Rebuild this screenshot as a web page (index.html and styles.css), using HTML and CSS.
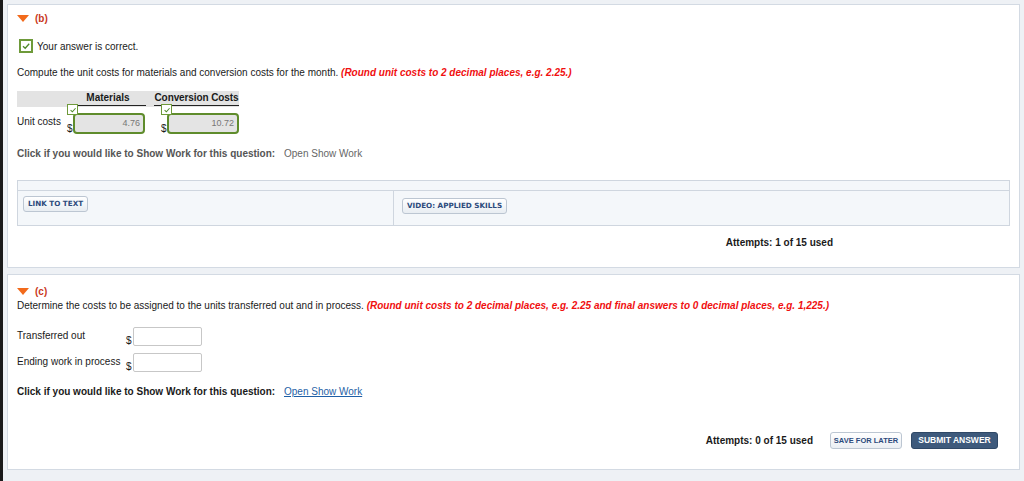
FILE: index.html
```html
<!DOCTYPE html>
<html lang="en">
<head>
  <meta charset="UTF-8">
  <title>Question Parts</title>
  <link rel="stylesheet" href="styles.css">
</head>
<body>

  <div class="panel panel-b">
    <div class="part-head"><span class="arrow"></span><span class="part-label">(b)</span></div>

    <div class="correct">
      <span class="check-box big"><svg viewBox="0 0 10 10"><path d="M2 5.2 L4.2 7.3 L8.2 2.8" /></svg></span>
      <span>Your answer is correct.</span>
    </div>

    <div class="question">Compute the unit costs for materials and conversion costs for the month. <span class="hint">(Round unit costs to 2 decimal places, e.g. 2.25.)</span></div>

    <div class="cost-table">
      <div class="cost-head">
        <div class="head-spacer"></div>
        <div class="head-cell mat">Materials</div>
        <div class="head-cell conv">Conversion Costs</div>
      </div>
      <div class="cost-row">
        <div class="row-label">Unit costs</div>
        <div class="cost-cell mat">
          <span class="dollar">$</span>
          <div class="answer">
            <span class="check-box small"><svg viewBox="0 0 10 10"><path d="M2 5.2 L4.2 7.3 L8.2 2.8" /></svg></span>
            <div class="answer-input">4.76</div>
          </div>
        </div>
        <div class="cost-cell conv">
          <span class="dollar">$</span>
          <div class="answer">
            <span class="check-box small"><svg viewBox="0 0 10 10"><path d="M2 5.2 L4.2 7.3 L8.2 2.8" /></svg></span>
            <div class="answer-input">10.72</div>
          </div>
        </div>
      </div>
    </div>

    <div class="show-work muted">
      <span class="sw-label">Click if you would like to Show Work for this question:</span>
      <span class="sw-link">Open Show Work</span>
    </div>

    <div class="resources">
      <div class="res-top"></div>
      <div class="res-row">
        <div class="res-cell left"><span class="res-btn">LINK TO TEXT</span></div>
        <div class="res-cell right"><span class="res-btn">VIDEO: APPLIED SKILLS</span></div>
      </div>
    </div>

    <div class="attempts-row first">
      <span class="attempts">Attempts: 1 of 15 used</span>
    </div>
  </div>

  <div class="panel panel-c">
    <div class="part-head"><span class="arrow"></span><span class="part-label">(c)</span></div>

    <div class="question tight">Determine the costs to be assigned to the units transferred out and in process. <span class="hint">(Round unit costs to 2 decimal places, e.g. 2.25 and final answers to 0 decimal places, e.g. 1,225.)</span></div>

    <div class="entry top">
      <div class="entry-label">Transferred out</div>
      <span class="dollar">$</span>
      <div class="blank-input"></div>
    </div>
    <div class="entry">
      <div class="entry-label">Ending work in process</div>
      <span class="dollar">$</span>
      <div class="blank-input"></div>
    </div>

    <div class="show-work">
      <span class="sw-label">Click if you would like to Show Work for this question:</span>
      <a class="sw-link link" href="#">Open Show Work</a>
    </div>

    <div class="attempts-row second">
      <span class="attempts">Attempts: 0 of 15 used</span>
      <span class="btn save">SAVE FOR LATER</span>
      <span class="btn submit">SUBMIT ANSWER</span>
    </div>
  </div>

</body>
</html>
```

FILE: styles.css
```css
* {
  box-sizing: border-box;
}

body {
  margin: 0;
  padding: 4px 4px 10px 4px;
  background-color: #eef1f5;
  border-left: 3px solid #1a1a1a;
  font-family: "Liberation Sans", Arial, sans-serif;
  font-size: 10px;
  color: #1a1a1a;
  min-height: 481px;
}

.panel {
  background-color: white;
  border: 1px solid #d3dae3;
  padding: 6px 9px 0 9px;
}

.panel-b {
  height: 264px;
}

.panel-c {
  margin-top: 6px;
  height: 196px;
  padding-top: 9px;
}

.part-head {
  display: flex;
  align-items: center;
  height: 14px;
  gap: 6px;
}

.arrow {
  width: 0;
  height: 0;
  border-left: 6px solid transparent;
  border-right: 6px solid transparent;
  border-top: 7px solid #f26a1b;
  margin-top: 1px;
}

.part-label {
  color: #c9381c;
  font-weight: bold;
  font-size: 10px;
}

.correct {
  display: flex;
  align-items: center;
  gap: 4px;
  margin-top: 14px;
  margin-left: 2px;
  height: 14px;
}

.check-box {
  display: inline-flex;
  align-items: center;
  justify-content: center;
  background: white;
  border: 2px solid #6e9a3a;
}

.check-box svg {
  fill: none;
  stroke: #4f8a2a;
  stroke-width: 1.3;
}

.check-box.big {
  width: 14px;
  height: 14px;
}

.check-box.big svg {
  width: 10px;
  height: 10px;
}

.check-box.small {
  position: absolute;
  top: -9px;
  left: -6px;
  width: 11px;
  height: 11px;
  border-width: 1px;
}

.check-box.small svg {
  width: 8px;
  height: 8px;
}

.question {
  margin-top: 13px;
  line-height: 14px;
}

.question.tight {
  margin-top: 1px;
}

.hint {
  color: #f01010;
  font-weight: bold;
  font-style: italic;
}

.cost-table {
  margin-top: 11px;
}

.cost-head {
  display: flex;
  width: 222px;
  height: 16px;
  background-color: #e3e3e3;
}

.head-spacer {
  width: 53px;
}

.head-cell {
  font-weight: bold;
  text-align: center;
  white-space: nowrap;
  height: 15px;
  line-height: 14px;
  border-bottom: 1px solid #222;
}

.head-cell.mat {
  width: 76px;
}

.head-cell.conv {
  width: 85px;
  margin-left: 8px;
  letter-spacing: -0.1px;
}

.cost-row {
  display: flex;
  height: 27px;
}

.row-label {
  width: 50px;
  padding-top: 9px;
}

.cost-cell {
  display: flex;
  align-items: flex-end;
  padding-top: 5px;
}

.cost-cell.conv {
  margin-left: 16px;
}

.cost-cell .dollar {
  width: 6px;
  line-height: 10px;
}

.answer {
  position: relative;
}

.answer-input {
  width: 72px;
  height: 21px;
  border: 2px solid #5f8c2c;
  border-radius: 4px;
  background-color: #e4e4e4;
  color: #777;
  font-size: 9px;
  text-align: right;
  padding: 3px 3px 0 0;
}

.show-work {
  display: flex;
  margin-top: 13px;
  line-height: 14px;
}

.sw-label {
  font-weight: bold;
  width: 267px;
}

.muted .sw-label {
  color: #555;
}

.sw-link {
  color: #666;
}

.sw-link.link {
  color: #1f5fa6;
}

.resources {
  margin-top: 19px;
  border: 1px solid #cfd6df;
  background-color: #f4f7fa;
}

.res-top {
  height: 10px;
  border-bottom: 1px solid #cfd6df;
}

.res-row {
  display: flex;
  height: 34px;
}

.res-cell.left {
  width: 375px;
  padding: 5px 5px;
}

.res-cell.right {
  flex: 1;
  border-left: 1px solid #cfd6df;
  padding: 7px 8px;
}

.res-btn {
  display: inline-block;
  font-family: "DejaVu Sans", Verdana, sans-serif;
  font-weight: bold;
  font-size: 7.2px;
  color: #2c4a7c;
  background: linear-gradient(#ffffff, #e8edf2);
  border: 1px solid #bcc6d2;
  border-radius: 3px;
  padding: 3px 4px;
  line-height: 8px;
}

.attempts-row {
  display: flex;
  justify-content: flex-end;
  align-items: center;
}

.attempts-row.first {
  margin-top: 10px;
  padding-right: 177px;
  height: 12px;
}

.attempts-row.second {
  margin-top: 32px;
  padding-right: 12px;
  height: 18px;
}

.attempts {
  font-weight: bold;
}

.btn {
  display: inline-flex;
  align-items: center;
  justify-content: center;
  height: 17px;
  font-weight: bold;
  border-radius: 3px;
}

.btn.save {
  margin-left: 17px;
  width: 72px;
  font-size: 7.5px;
  color: #2c4a7c;
  background: linear-gradient(#ffffff, #eaeef3);
  border: 1px solid #bcc6d2;
}

.btn.submit {
  margin-left: 9px;
  width: 87px;
  font-size: 8.5px;
  color: white;
  background-color: #3e5a7c;
  border: 1px solid #2f4866;
}

.entry {
  display: flex;
  align-items: flex-end;
  height: 19px;
  margin-top: 7px;
}

.entry.top {
  margin-top: 14px;
}

.entry-label {
  width: 109px;
  align-self: flex-start;
  line-height: 12px;
  padding-top: 3px;
}

.entry .dollar {
  width: 7px;
  line-height: 10px;
}

.blank-input {
  width: 69px;
  height: 19px;
  border: 1px solid #c7c7c7;
  border-radius: 2px;
  background: white;
}
```
